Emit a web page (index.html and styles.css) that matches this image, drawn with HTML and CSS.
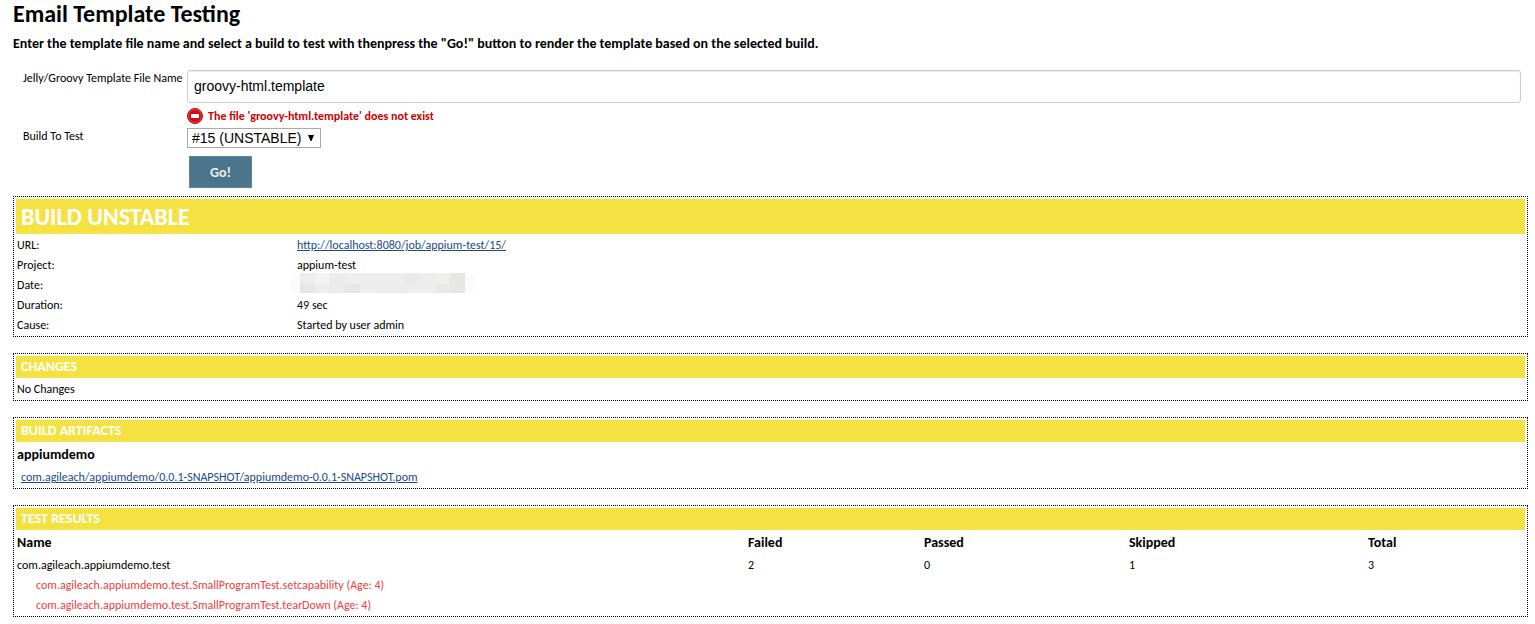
FILE: index.html
```html
<!DOCTYPE html>
<html lang="en">
<head>
    <meta charset="UTF-8">
    <meta name="viewport" content="width=device-width, initial-scale=1.0">
    <title>Email Template Testing</title>
    <link rel="stylesheet" href="styles.css">
</head>
<body>
    <h1 class="page-title">Email Template Testing</h1>
    <p class="intro">Enter the template file name and select a build to test with thenpress the "Go!" button to render the template based on the selected build.</p>

    <form class="test-form">
        <label for="template">Jelly/Groovy Template File Name</label>
        <div class="field">
            <input type="text" id="template" class="text-input" value="groovy-html.template">
            <div class="error">
                <svg class="error-icon" width="16" height="16" viewBox="0 0 16 16" aria-hidden="true">
                    <circle cx="8" cy="8" r="7.5" fill="#d50b0f" stroke="#b90d10"/>
                    <circle cx="8" cy="8" r="6.5" fill="none" stroke="#ee5a55" stroke-width="0.7"/>
                    <rect x="4" y="6" width="8" height="4" rx="0.5" fill="#fff"/>
                </svg>
                <span>The file 'groovy-html.template' does not exist</span>
            </div>
        </div>

        <label for="build">Build To Test</label>
        <div class="select-wrap">
            <select id="build" class="build-select">
                <option>#15 (UNSTABLE)</option>
            </select>
            <svg class="arrow" width="6" height="6" viewBox="0 0 6 6" aria-hidden="true"><path d="M0 0h6L3.5 6h-1z"/></svg>
        </div>

        <button type="button" class="go-btn">Go!</button>
    </form>

    <section class="box">
        <h2 class="box-title main">BUILD UNSTABLE</h2>
        <table class="info">
            <tr><th>URL:</th><td><a href="http://localhost:8080/job/appium-test/15/">http://localhost:8080/job/appium-test/15/</a></td></tr>
            <tr><th>Project:</th><td>appium-test</td></tr>
            <tr>
                <th>Date:</th>
                <td>
                    <svg class="hidden-date" width="186" height="20" viewBox="0 0 186 20" aria-hidden="true">
                        <rect width="186" height="20" rx="10" fill="#fbfbfc"/>
                        <path fill="#ededee" d="M10 0h165v20H10z"/>
                        <path fill="#f2f2f2" d="M25 0h15v11H25z"/>
                        <path fill="#ebebee" d="M40 0h15v20H40z"/>
                        <path fill="#efeeec" d="M55 0h15v11H55z"/>
                        <path fill="#e6e6e7" d="M10 11h15v9H10zM55 11h15v9H55z"/>
                        <path fill="#eaeceb" d="M85 11h30v9H85z"/>
                        <path fill="#e9e9ea" d="M115 0h15v11h-15z"/>
                        <path fill="#f0f0ea" d="M145 0h15v11h-15z"/>
                        <path fill="#eae9e4" d="M145 11h15v9h-15z"/>
                        <path fill="#e6e6e4" d="M160 0h15v20h-15z"/>
                    </svg>
                </td>
            </tr>
            <tr><th>Duration:</th><td>49 sec</td></tr>
            <tr><th>Cause:</th><td>Started by user admin</td></tr>
        </table>
    </section>

    <section class="box">
        <h2 class="box-title">CHANGES</h2>
        <p class="row">No Changes</p>
    </section>

    <section class="box">
        <h2 class="box-title">BUILD ARTIFACTS</h2>
        <h3 class="module">appiumdemo</h3>
        <p class="row artifact"><a href="#">com.agileach/appiumdemo/0.0.1-SNAPSHOT/appiumdemo-0.0.1-SNAPSHOT.pom</a></p>
    </section>

    <section class="box">
        <h2 class="box-title">TEST RESULTS</h2>
        <table class="results">
            <thead>
                <tr>
                    <th class="col-name">Name</th>
                    <th class="col-failed">Failed</th>
                    <th class="col-passed">Passed</th>
                    <th class="col-skipped">Skipped</th>
                    <th class="col-total">Total</th>
                </tr>
            </thead>
            <tbody>
                <tr><td>com.agileach.appiumdemo.test</td><td>2</td><td>0</td><td>1</td><td>3</td></tr>
                <tr><td class="failed" colspan="5">com.agileach.appiumdemo.test.SmallProgramTest.setcapability (Age: 4)</td></tr>
                <tr><td class="failed" colspan="5">com.agileach.appiumdemo.test.SmallProgramTest.tearDown (Age: 4)</td></tr>
            </tbody>
        </table>
    </section>
</body>
</html>
```
FILE: styles.css
```css
* { margin: 0; padding: 0; box-sizing: border-box; }

body {
    padding: 0 7px 7px 13px;
    background: #fff;
    color: #000;
    font-family: Calibri, Carlito, Lato, sans-serif;
    font-size: 12px;
    line-height: 20px;
}

a { color: #204a87; }

.page-title {
    font-size: 24px;
    line-height: 28px;
}

.intro {
    padding: 6px 0 16px;
    font-size: 14px;
    font-weight: 700;
}

/* form */
.test-form {
    display: grid;
    grid-template-columns: 164px 1fr;
    padding: 0 7px 8px 10px;
}

.test-form label {
    line-height: 16px;
    white-space: nowrap;
}

.text-input {
    display: block;
    width: 100%;
    height: 33px;
    padding: 0 6px 1px;
    border: 1px solid #ccc;
    border-radius: 3px;
    box-shadow: inset 0 1px 1px rgba(0, 0, 0, 0.08);
    font-family: Arial, "Liberation Sans", sans-serif;
    font-size: 14px;
}

.error {
    display: flex;
    align-items: center;
    gap: 5px;
    height: 25px;
    color: #c00;
    font-weight: 700;
}

.select-wrap {
    position: relative;
    width: 134px;
}

.build-select {
    display: block;
    width: 100%;
    height: 20px;
    padding: 0 4px;
    border: 1px solid #a9a9a9;
    background: #fff;
    color: #000;
    font-family: Arial, "Liberation Sans", sans-serif;
    font-size: 14px;
    appearance: none;
}

.arrow {
    position: absolute;
    top: 7px;
    right: 7px;
    pointer-events: none;
}

.go-btn {
    grid-column: 2;
    justify-self: start;
    width: 63px;
    height: 32px;
    margin: 8px 0 0 2px;
    border: 1px solid #5c879b;
    background: #4b758b;
    color: #eee;
    font-family: inherit;
    font-size: 14px;
    font-weight: 700;
}

/* report */
.box {
    margin-bottom: 16px;
    padding: 2px 2px 1px;
    border: 1px dotted #000;
}

.box-title {
    margin-bottom: 1px;
    padding: 0 5px;
    background: #f4e242;
    color: #fff;
    font-size: 14px;
    line-height: 22px;
}

.box-title.main {
    font-size: 24px;
    line-height: 35px;
}

.info, .results {
    width: 100%;
    table-layout: fixed;
    border-collapse: collapse;
}

th, td {
    height: 20px;
    padding: 0 1px;
    text-align: left;
}

.info th {
    width: 280px;
    font-weight: 400;
}

.hidden-date {
    display: block;
    margin: -2px 0 2px -7px;
}

.row { padding: 0 1px; }

.artifact { padding-left: 5px; }

.module {
    padding: 0 1px;
    font-size: 14px;
    line-height: 24px;
}

.results th {
    height: 24px;
    font-size: 14px;
}

.col-name { width: 731px; }
.col-failed { width: 176px; }
.col-passed { width: 205px; }
.col-skipped { width: 239px; }
.col-total { width: 158px; }

.results .failed {
    padding-left: 20px;
    color: #ef4040;
}
```
